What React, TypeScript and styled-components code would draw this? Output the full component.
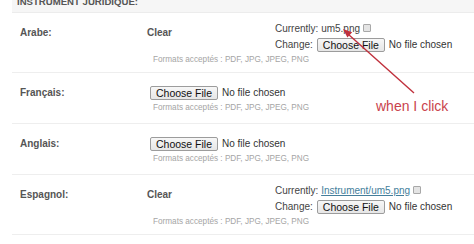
import React from "react";
import styled, { createGlobalStyle } from "styled-components";

const GlobalStyle = createGlobalStyle`
	html, body {
		margin: 0;
		padding: 0;
		background: #ffffff;
		overflow: hidden;
	}
	#root {
		position: relative;
		width: 474px;
		height: 244px;
	}
`;

const Fieldset = styled.div`
	padding-left: 12px;
	font-family: "Liberation Sans", Arial, sans-serif;
`;

const Header = styled.div`
	height: 12px;
	overflow: hidden;
	background: #f6f6f6;
	border-bottom: 1px solid #ececec;
`;

const HeaderTitle = styled.h2`
	margin: -3px 0 0 5px;
	font-size: 9.6px;
	line-height: 10px;
	font-weight: bold;
	color: #555555;
	white-space: nowrap;
`;

const Row = styled.div<{ $clearable?: boolean }>`
	display: grid;
	grid-template-columns: 127px 1fr;
	padding: ${(p) => (p.$clearable ? "8px 0 6px 8px" : "12px 0 9px 8px")};
	border-bottom: 1px solid #eeeeee;
`;

const Label = styled.div<{ $clearable?: boolean }>`
	margin-top: ${(p) => (p.$clearable ? "4px" : "0")};
	font-size: 10px;
	line-height: 15px;
	font-weight: bold;
	color: #555555;
`;

const Value = styled.div`
	display: flex;
	flex-direction: column;
`;

const ClearRow = styled.div`
	display: flex;
`;

const ClearLabel = styled.div`
	width: 128px;
	flex-shrink: 0;
	margin-top: 4px;
	font-size: 10px;
	line-height: 15px;
	font-weight: bold;
	color: #555555;
`;

const Widget = styled.div`
	display: flex;
	flex-direction: column;
	gap: 1px;
`;

const Line = styled.div<{ $tall?: boolean }>`
	display: flex;
	align-items: center;
	height: ${(p) => (p.$tall ? "17px" : "14px")};
	font-size: 10px;
	color: #444444;
	white-space: nowrap;
`;

const FileLine = styled.div`
	display: flex;
	align-items: center;
	height: 15px;
	margin-left: 3px;
	font-size: 10px;
	color: #444444;
	white-space: nowrap;
`;

const Caption = styled.span`
	flex-shrink: 0;
	padding-right: 4px;
`;

const Link = styled.a`
	color: #447e9b;
	text-decoration: underline;
`;

const Box = styled.span`
	width: 8px;
	height: 8px;
	margin-left: 3px;
	border: 1px solid #a8a8a8;
	border-radius: 1px;
	background: #e4e4e4;
	box-sizing: border-box;
`;

const FileButton = styled.span`
	display: inline-flex;
	align-items: center;
	flex-shrink: 0;
	height: 14px;
	padding: 0 5px;
	box-sizing: border-box;
	border: 1px solid #9c9c9c;
	border-radius: 2px;
	background: linear-gradient(#f7f7f7, #e6e6e6);
	font-size: 10.5px;
	color: #111111;
`;

const NoFile = styled.span`
	margin-left: 4px;
	font-size: 10px;
	color: #333333;
`;

const Help = styled.div<{ $clearable?: boolean }>`
	margin: ${(p) => (p.$clearable ? "1px" : "2px")} 0 0 6px;
	height: 12px;
	line-height: 12px;
	font-size: 8.2px;
	color: #a5a5a5;
	white-space: nowrap;
`;

const Annotation = styled.svg`
	position: absolute;
	left: 0;
	top: 0;
	pointer-events: none;
`;

const Note = styled.div`
	position: absolute;
	left: 376px;
	top: 98px;
	font-family: "Liberation Sans", Arial, sans-serif;
	font-size: 14px;
	line-height: 17px;
	color: #c9424c;
`;

type Field = { label: string; current?: string; link?: boolean };

const fields: Field[] = [
	{ label: "Arabe:", current: "um5.png" },
	{ label: "Français:" },
	{ label: "Anglais:" },
	{ label: "Espagnol:", current: "Instrument/um5.png", link: true },
];

function FileInput() {
	return (
		<>
			<FileButton>Choose File</FileButton>
			<NoFile>No file chosen</NoFile>
		</>
	);
}

function FieldRow({ label, current, link }: Field) {
	const clearable = !!current;
	return (
		<Row $clearable={clearable}>
			<Label $clearable={clearable}>{label}</Label>
			<Value>
				{clearable ? (
					<ClearRow>
						<ClearLabel>Clear</ClearLabel>
						<Widget>
							<Line>
								Currently:&nbsp;{link ? <Link>{current}</Link> : current}
								<Box />
							</Line>
							<Line $tall>
								<Caption>Change:</Caption>
								<FileInput />
							</Line>
						</Widget>
					</ClearRow>
				) : (
					<FileLine>
						<FileInput />
					</FileLine>
				)}
				<Help $clearable={clearable}>Formats acceptés : PDF, JPG, JPEG, PNG</Help>
			</Value>
		</Row>
	);
}

export default function App() {
	return (
		<>
			<GlobalStyle />
			<Fieldset>
				<Header>
					<HeaderTitle>INSTRUMENT JURIDIQUE:</HeaderTitle>
				</Header>
				{fields.map((f) => (
					<FieldRow key={f.label} {...f} />
				))}
			</Fieldset>
			<Annotation width="474" height="244" viewBox="0 0 474 244">
				<line x1="414" y1="93" x2="348" y2="34" stroke="#c0303c" strokeWidth="1.4" />
				<polygon points="343,29 352.2,32.2 347.4,37.6" fill="#c0303c" />
			</Annotation>
			<Note>when I click</Note>
		</>
	);
}
